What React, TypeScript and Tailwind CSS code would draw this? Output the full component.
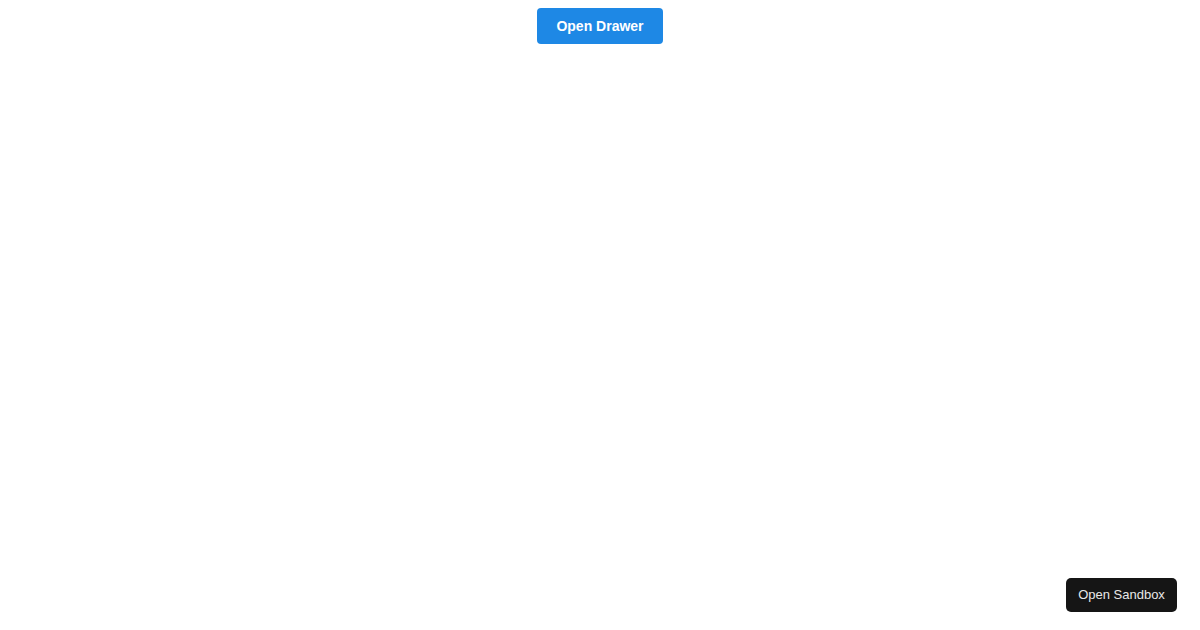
export default function App() {
  return (
    <div className="relative h-[630px] w-full bg-white font-['Liberation_Sans',Arial,sans-serif]">
      <div className="flex justify-center pt-2">
        <button className="h-9 w-[126px] rounded bg-[#1e88e5] text-[14px] font-bold text-white">
          Open Drawer
        </button>
      </div>

      {/* Sandbox link */}
      <button className="absolute bottom-[18px] right-[23px] h-[34px] w-[111px] rounded-[5px] bg-[#151515] text-[13px] text-[#e8e8e8]">
        Open Sandbox
      </button>
    </div>
  )
}
